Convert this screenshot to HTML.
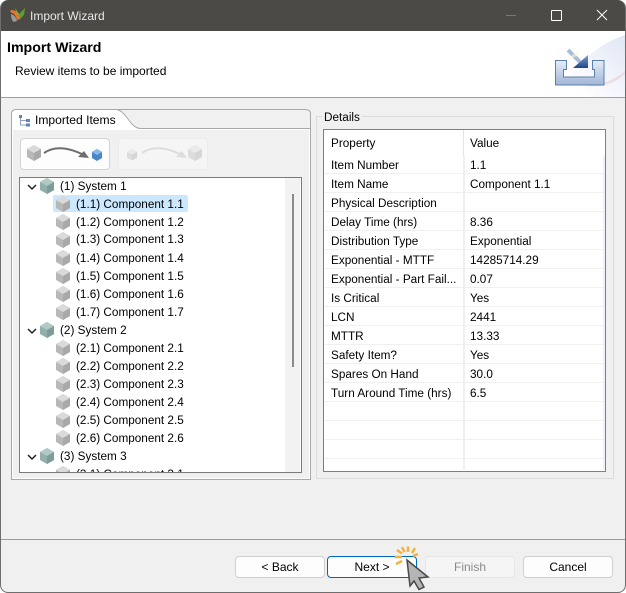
<!DOCTYPE html>
<html><head><meta charset="utf-8"><style>
html,body{margin:0;padding:0;background:#fff;}
#w{position:relative;width:626px;height:593px;overflow:hidden;font:11.75px/16px "Liberation Sans",sans-serif;color:#000;background:#fff;}
#f{position:absolute;left:0;top:0;width:624px;height:591px;border:1px solid #6e6e6e;border-radius:8px;background:#f0f0f0;overflow:hidden;}
.a{position:absolute;white-space:nowrap;}
.t{position:absolute;white-space:nowrap;height:16px;line-height:16px;margin-top:1px;}
.l{position:absolute;left:324px;width:279px;height:1px;background:#f0f0f0;}
.b{position:absolute;top:556px;width:88px;height:20px;border:1px solid #d0d0d0;border-radius:4px;background:#fdfdfd;text-align:center;line-height:20px;font-size:12px;}
</style></head><body>
<div id="w">
<div id="f"></div>
<svg width="0" height="0" style="position:absolute"><defs>
<g id="g"><path d="M7 0L14 4V12L7 16L0 12V4Z" fill="#b8b8b8"/><path d="M7 0L14 4L7 8L0 4Z" fill="#dadada"/><path d="M7 8L14 4V12L7 16Z" fill="#a9a9a9"/></g>
<g id="s"><path d="M7 0L14 4V12L7 16L0 12V4Z" fill="#93aeac"/><path d="M7 0L14 4L7 8L0 4Z" fill="#b2cac7"/><path d="M7 8L14 4V12L7 16Z" fill="#7f9b9b"/></g>
<path id="c" d="M1 1L5 5L9 1" fill="none" stroke="#222" stroke-width="1.5"/>
</defs></svg>
<!-- title bar -->
<div class="a" style="left:1px;top:0;width:624px;height:31px;background:#4b4a46;border-radius:8px 8px 0 0"></div>
<svg class="a" style="left:9px;top:7px" width="18" height="17"><path d="M8 9L16 1L15 8L10 13Z" fill="#5a9e2e"/><path d="M2 3C7 3 10 6 11 12L8 13C7 9 5 6 1 5Z" fill="#e8762a"/><path d="M2 7C5 8 7 10 8 14L5 15C3 14 2 11 2 7Z" fill="#999"/><path d="M6 1L10 7L8 8Z" fill="#7bb53c"/></svg>
<div class="t" style="left:30px;top:7px;color:#e8e8e8;font-size:12px">Import Wizard</div>
<div class="a" style="left:506px;top:15px;width:10px;height:1px;background:#777"></div>
<div class="a" style="left:551px;top:10px;width:9px;height:9px;border:1px solid #fff;border-radius:1px"></div>
<svg class="a" style="left:596px;top:9px" width="12" height="12"><path d="M1 1L11 11M11 1L1 11" stroke="#fff" stroke-width="1" fill="none"/></svg>
<!-- header -->
<div class="a" style="left:1px;top:31px;width:624px;height:66px;background:#fff"></div>
<div class="a" style="left:1px;top:97px;width:624px;height:1px;background:#a0a0a0"></div>
<div class="t" style="left:7px;top:39px;font-size:14.2px;font-weight:bold">Import Wizard</div>
<div class="t" style="left:15px;top:62px;font-size:12px">Review items to be imported</div>
<svg class="a" style="left:545px;top:31px" width="80" height="66">
<defs><linearGradient id="h" x1="0" y1="1" x2="1" y2="0"><stop offset="0.2" stop-color="#fff"/><stop offset="1" stop-color="#e0e6f5"/></linearGradient>
<linearGradient id="tr" x1="0" y1="0" x2="0" y2="1"><stop offset="0" stop-color="#e6edf7"/><stop offset="1" stop-color="#9fb6d6"/></linearGradient>
<linearGradient id="ah" x1="0" y1="0" x2="0" y2="1"><stop offset="0" stop-color="#7f9fcb"/><stop offset="1" stop-color="#1f478a"/></linearGradient></defs>
<path d="M12 66C25 38 50 14 80 4V66Z" fill="url(#h)"/>
<path d="M40 55C55 54 68 50 80 40V43C70 52 60 55 50 55Z" fill="#e8cfd3" opacity=".6"/>
<path d="M10.500 29.500H21.500V38.500H18.500V46H49.500V38.500H47.500V29.500H59V54H10.500Z" fill="url(#tr)" stroke="#5b7fae"/>
<path d="M23 19L35 31" stroke="#a8bcd8" stroke-width="4"/>
<path d="M28 37L43 24V37Z" fill="url(#ah)"/>
<path d="M24 28L31 20L35 24Z" fill="#fbf7d8" opacity=".6"/>
</svg>
<!-- left tab folder -->
<div class="a" style="left:11px;top:128px;width:298px;height:350px;border:1px solid #a8a8a8;background:#f0f0f0;box-shadow:inset 0 0 0 1px #fff"></div>
<svg class="a" style="left:11px;top:108px" width="300" height="22"><path d="M1 21V6Q1 2 5 2H104C116 2 118 21 130 21Z" fill="#fff"/><path d="M0.500 21V6Q0.500 1.500 5 1.500H104C116 1.500 118 20.500 130 20.500H299" fill="none" stroke="#a8a8a8"/><path d="M104 1.500H294Q299.500 1.500 299.500 6V21" fill="none" stroke="#a8a8a8"/></svg>
<svg class="a" style="left:18px;top:114px" width="14" height="14"><path d="M2.500 2V11H9M2.500 6.500H9" fill="none" stroke="#8fa0b5"/><rect x="1" y="1" width="3" height="3" fill="#5b85b5"/><rect x="8" y="5" width="4" height="3" fill="#5b85b5"/><rect x="8" y="9.500" width="4" height="3" fill="#5b85b5"/></svg>
<div class="t" style="left:35px;top:111px;font-size:12.1px">Imported Items</div>
<!-- toolbar -->
<div class="a" style="left:20px;top:138px;width:88px;height:30px;border:1px solid #d4d4d4;border-radius:4px;background:#fdfdfd"></div>
<svg class="a" style="left:26px;top:144px" width="80" height="20"><use href="#g" transform="translate(1,1)"/><path d="M18 9C28 2 42 3 58 11" fill="none" stroke="#6e6e6e" stroke-width="2"/><path d="M63 14L52 13L58 7Z" fill="#6e6e6e"/><path d="M71 5L76 8V14L71 17L66 14V8Z" fill="#4a86c8"/><path d="M71 5L76 8L71 11L66 8Z" fill="#8cb8e8"/></svg>
<div class="a" style="left:118px;top:138px;width:88px;height:30px;border:1px solid #ececec;border-radius:4px;background:#f5f5f5"></div>
<svg class="a" style="left:124px;top:144px" width="80" height="20" opacity=".4"><use href="#g" transform="translate(3,5) scale(.72)"/><path d="M18 9C28 2 42 3 58 11" fill="none" stroke="#bbb" stroke-width="2"/><path d="M63 14L52 13L58 7Z" fill="#bbb"/><use href="#g" transform="translate(64,1)"/></svg>
<!-- tree -->
<div class="a" style="left:19px;top:177px;width:281px;height:294px;border:1px solid #7a7a7a;background:#fff;overflow:hidden">
<div class="a" style="left:265px;top:0;width:15px;height:294px;background:#f2f2f2"></div>
<div class="a" style="left:272px;top:16px;width:2px;height:173px;background:#8a8a8a"></div>
<div class="a" style="left:33px;top:17px;width:135px;height:17px;background:#cce8ff;border-radius:2px"></div>
<svg class="a" style="left:7px;top:6px" width="12" height="8"><use href="#c"/></svg><svg class="a" style="left:20px;top:0" width="14" height="16"><use href="#s"/></svg><div class="t" style="left:40px;top:0">(1) System 1</div>
<svg class="a" style="left:36px;top:18px" width="14" height="16"><use href="#g"/></svg><div class="t" style="left:56px;top:18px">(1.1) Component 1.1</div>
<svg class="a" style="left:36px;top:36px" width="14" height="16"><use href="#g"/></svg><div class="t" style="left:56px;top:36px">(1.2) Component 1.2</div>
<svg class="a" style="left:36px;top:54px" width="14" height="16"><use href="#g"/></svg><div class="t" style="left:56px;top:53px">(1.3) Component 1.3</div>
<svg class="a" style="left:36px;top:72px" width="14" height="16"><use href="#g"/></svg><div class="t" style="left:56px;top:72px">(1.4) Component 1.4</div>
<svg class="a" style="left:36px;top:90px" width="14" height="16"><use href="#g"/></svg><div class="t" style="left:56px;top:90px">(1.5) Component 1.5</div>
<svg class="a" style="left:36px;top:108px" width="14" height="16"><use href="#g"/></svg><div class="t" style="left:56px;top:108px">(1.6) Component 1.6</div>
<svg class="a" style="left:36px;top:126px" width="14" height="16"><use href="#g"/></svg><div class="t" style="left:56px;top:126px">(1.7) Component 1.7</div>
<svg class="a" style="left:7px;top:150px" width="12" height="8"><use href="#c"/></svg><svg class="a" style="left:20px;top:144px" width="14" height="16"><use href="#s"/></svg><div class="t" style="left:40px;top:144px">(2) System 2</div>
<svg class="a" style="left:36px;top:162px" width="14" height="16"><use href="#g"/></svg><div class="t" style="left:56px;top:162px">(2.1) Component 2.1</div>
<svg class="a" style="left:36px;top:180px" width="14" height="16"><use href="#g"/></svg><div class="t" style="left:56px;top:180px">(2.2) Component 2.2</div>
<svg class="a" style="left:36px;top:198px" width="14" height="16"><use href="#g"/></svg><div class="t" style="left:56px;top:198px">(2.3) Component 2.3</div>
<svg class="a" style="left:36px;top:216px" width="14" height="16"><use href="#g"/></svg><div class="t" style="left:56px;top:216px">(2.4) Component 2.4</div>
<svg class="a" style="left:36px;top:234px" width="14" height="16"><use href="#g"/></svg><div class="t" style="left:56px;top:234px">(2.5) Component 2.5</div>
<svg class="a" style="left:36px;top:252px" width="14" height="16"><use href="#g"/></svg><div class="t" style="left:56px;top:252px">(2.6) Component 2.6</div>
<svg class="a" style="left:7px;top:276px" width="12" height="8"><use href="#c"/></svg><svg class="a" style="left:20px;top:270px" width="14" height="16"><use href="#s"/></svg><div class="t" style="left:40px;top:270px">(3) System 3</div>
<svg class="a" style="left:36px;top:288px" width="14" height="16"><use href="#g"/></svg><div class="t" style="left:56px;top:288px">(3.1) Component 3.1</div>
</div>
<!-- details group -->
<div class="a" style="left:316px;top:116px;width:296px;height:361px;border:1px solid #dcdcdc"></div>
<div class="t" style="left:322px;top:109px;background:#f0f0f0;padding:0 2px">Details</div>
<div class="a" style="left:323px;top:129px;width:281px;height:341px;border:1px solid #7f7f7f;background:#fff"></div>
<div class="a" style="left:463px;top:130px;width:1px;height:26px;background:#e5e5e5"></div>
<div class="a" style="left:463px;top:156px;width:2px;height:314px;background:#f0f0f0"></div>
<div class="a" style="left:603px;top:156px;width:2px;height:314px;background:#eef1f8"></div>
<div class="l" style="top:173px"></div><div class="l" style="top:192px"></div><div class="l" style="top:211px"></div><div class="l" style="top:230px"></div><div class="l" style="top:249px"></div><div class="l" style="top:268px"></div><div class="l" style="top:287px"></div><div class="l" style="top:306px"></div><div class="l" style="top:325px"></div><div class="l" style="top:344px"></div><div class="l" style="top:363px"></div><div class="l" style="top:382px"></div><div class="l" style="top:401px"></div><div class="l" style="top:420px"></div><div class="l" style="top:439px"></div><div class="l" style="top:458px"></div>
<div class="t" style="left:331px;top:135px">Property</div><div class="t" style="left:470px;top:135px">Value</div>
<div class="t" style="left:331px;top:157px">Item Number</div><div class="t" style="left:470px;top:157px">1.1</div>
<div class="t" style="left:331px;top:176px">Item Name</div><div class="t" style="left:470px;top:176px">Component 1.1</div>
<div class="t" style="left:331px;top:195px">Physical Description</div>
<div class="t" style="left:331px;top:214px">Delay Time (hrs)</div><div class="t" style="left:470px;top:214px">8.36</div>
<div class="t" style="left:331px;top:233px">Distribution Type</div><div class="t" style="left:470px;top:233px">Exponential</div>
<div class="t" style="left:331px;top:252px">Exponential - MTTF</div><div class="t" style="left:470px;top:252px">14285714.29</div>
<div class="t" style="left:331px;top:271px">Exponential - Part Fail...</div><div class="t" style="left:470px;top:271px">0.07</div>
<div class="t" style="left:331px;top:290px">Is Critical</div><div class="t" style="left:470px;top:290px">Yes</div>
<div class="t" style="left:331px;top:309px">LCN</div><div class="t" style="left:470px;top:309px">2441</div>
<div class="t" style="left:331px;top:328px">MTTR</div><div class="t" style="left:470px;top:328px">13.33</div>
<div class="t" style="left:331px;top:347px">Safety Item?</div><div class="t" style="left:470px;top:347px">Yes</div>
<div class="t" style="left:331px;top:366px">Spares On Hand</div><div class="t" style="left:470px;top:366px">30.0</div>
<div class="t" style="left:331px;top:385px">Turn Around Time (hrs)</div><div class="t" style="left:470px;top:385px">6.5</div>
<!-- bottom -->
<div class="a" style="left:1px;top:539px;width:624px;height:1px;background:#9a9a9a"></div>
<div class="b" style="left:235px">&lt; Back</div>
<div class="b" style="left:327px;border-color:#0067c0">Next &gt;</div>
<div class="b" style="left:425px;color:#8a8a8a;background:#f5f5f5;border-color:#e6e6e6">Finish</div>
<div class="b" style="left:523px">Cancel</div>
<!-- cursor -->
<svg class="a" style="left:392px;top:545px" width="40" height="46">
<g stroke="#f6b13a" stroke-width="2.500" fill="none"><path d="M3 12H10M5 5L10 8.500M10 2L12.500 7M16 1.500V7M23 3L20 8M26 9L21 11M4 19L10 16"/></g>
<path d="M15 15L36 32L27 33L32 42L27 44.500L22 36L18 41Z" fill="#b5b5b5" stroke="#4a4a4a" stroke-width="1.500"/>
</svg>
</div>
</body></html>
